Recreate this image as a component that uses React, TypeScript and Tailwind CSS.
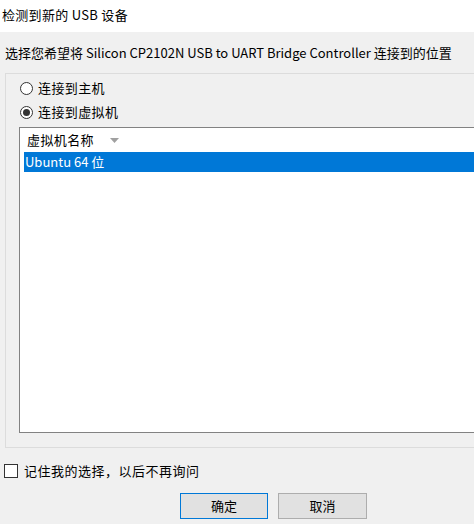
import React from "react";

const font = { fontFamily: '"Noto Sans CJK SC", "Noto Sans", sans-serif' };

export default function App() {
  return (
    <div className="w-[474px] h-[524px] overflow-hidden flex flex-col text-[13px] text-[#000]" style={font}>
      <div className="h-[32px] bg-white flex items-center pl-[2px] pb-[2px] shrink-0 tracking-[0.3px]">
        检测到新的 USB 设备
      </div>
      <div className="flex-1 bg-[#f0f0f0] flex flex-col">
        <div className="h-[41px] flex items-center pl-[5px] shrink-0">
          选择您希望将 Silicon CP2102N USB to UART Bridge Controller 连接到的位置
        </div>
        <div className="ml-[5px] h-[375px] border-t border-l border-b border-[#dcdcdc] flex flex-col pl-[13px] pt-[2px] pb-[14px] shrink-0">
          <label className="h-[24px] flex items-center gap-[5px] pl-[1px] tracking-[0.4px]">
            <span className="w-[13px] h-[13px] rounded-full border border-[#333] bg-white" />
            <span>连接到主机</span>
          </label>
          <label className="h-[24px] flex items-center gap-[5px] pl-[1px] tracking-[0.4px]">
            <span className="w-[13px] h-[13px] rounded-full border border-[#333] bg-white flex items-center justify-center">
              <span className="w-[7px] h-[7px] rounded-full bg-[#333]" />
            </span>
            <span>连接到虚拟机</span>
          </label>
          <div className="mt-[3px] flex-1 border border-r-0 border-[#828282] bg-white flex flex-col">
            <div className="h-[24px] flex items-center pl-[7px] gap-[16px] shrink-0 tracking-[0.4px]">
              <span>虚拟机名称</span>
              <svg width="9" height="5" viewBox="0 0 9 5"><path d="M0 0 L9 0 L4.5 5 Z" fill="#a0a0a0" /></svg>
            </div>
            <div className="h-[20px] ml-[4px] bg-[#0078d7] text-white flex items-center pl-[1px]">
              Ubuntu 64 位
            </div>
          </div>
        </div>
        <div className="h-[45px] flex items-center pl-[4px] gap-[6px] shrink-0">
          <span className="w-[14px] h-[14px] border border-[#333] bg-white" />
          <span className="tracking-[0.5px]">记住我的选择，以后不再询问</span>
        </div>
        <div className="flex pl-[180px] gap-[10px]">
          <button className="w-[88px] h-[26px] border border-[#0078d7] bg-[#e1e1e1] text-[13px]">确定</button>
          <button className="w-[89px] h-[26px] border border-[#adadad] bg-[#e1e1e1] text-[13px]">取消</button>
        </div>
      </div>
    </div>
  );
}
